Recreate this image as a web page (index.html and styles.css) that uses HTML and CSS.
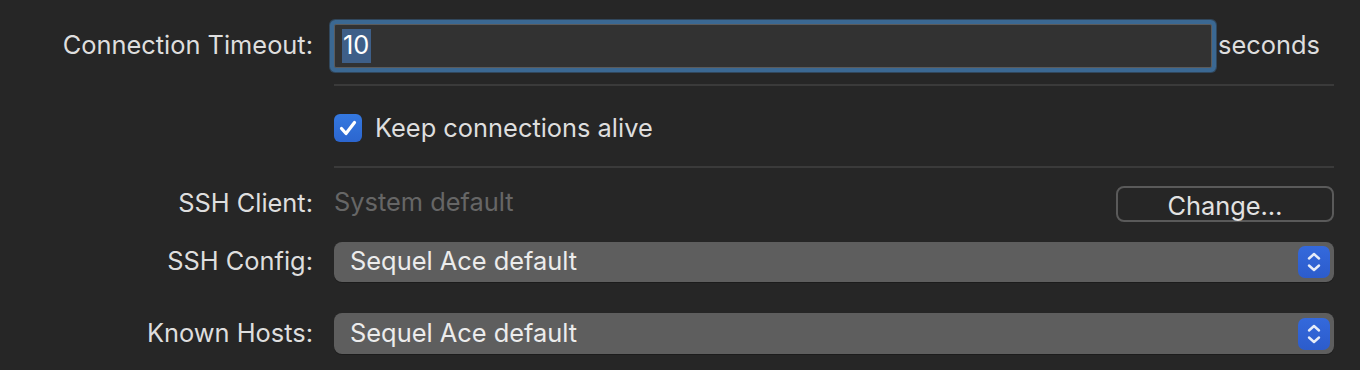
FILE: index.html
```html
<!DOCTYPE html>
<html>
<head>
<meta charset="utf-8">
<link rel="stylesheet" href="styles.css">
</head>
<body>
<div class="form">
  <div class="row row-timeout">
    <div class="label">Connection Timeout:</div>
    <div class="control">
      <div class="field"><span class="sel">10</span></div>
      <span class="unit">seconds</span>
    </div>
  </div>
  <div class="sep-row"><div></div><div class="sep"></div></div>
  <div class="row row-check">
    <div class="label"></div>
    <div class="control">
      <span class="checkbox">
        <svg width="28" height="28" viewBox="0 0 28 28"><path d="M7.5 14.5 L12 19.5 L20.5 8.5" fill="none" stroke="#fff" stroke-width="3.2" stroke-linecap="round" stroke-linejoin="round"/></svg>
      </span>
      <span class="check-label">Keep connections alive</span>
    </div>
  </div>
  <div class="sep-row sep-row2"><div></div><div class="sep"></div></div>
  <div class="row row-client">
    <div class="label">SSH Client:</div>
    <div class="control">
      <span class="muted">System default</span>
      <button class="btn">Change…</button>
    </div>
  </div>
  <div class="row row-config">
    <div class="label">SSH Config:</div>
    <div class="control">
      <div class="popup"><span>Sequel Ace default</span>
        <span class="stepper"><svg width="32" height="32" viewBox="0 0 32 32"><path d="M11 12.5 L16 8 L21 12.5 M11 19.5 L16 24 L21 19.5" fill="none" stroke="#e6ecf8" stroke-width="2.4" stroke-linecap="round" stroke-linejoin="round"/></svg></span>
      </div>
    </div>
  </div>
  <div class="row row-hosts">
    <div class="label">Known Hosts:</div>
    <div class="control">
      <div class="popup"><span>Sequel Ace default</span>
        <span class="stepper"><svg width="32" height="32" viewBox="0 0 32 32"><path d="M11 12.5 L16 8 L21 12.5 M11 19.5 L16 24 L21 19.5" fill="none" stroke="#e6ecf8" stroke-width="2.4" stroke-linecap="round" stroke-linejoin="round"/></svg></span>
      </div>
    </div>
  </div>
</div>
</body>
</html>
```
FILE: styles.css
```css
html, body {
  margin: 0;
  padding: 0;
  background: #262626;
  width: 1360px;
  height: 370px;
  overflow: hidden;
  font-family: Inter, "Noto Sans", sans-serif;
  font-size: 25.4px;
  color: #dedede;
}
.form {
  padding-top: 24px;
  padding-right: 26px;
  display: flex;
  flex-direction: column;
}
.row, .sep-row {
  display: grid;
  grid-template-columns: 313px 1fr;
  column-gap: 21px;
  align-items: center;
}
.label {
  text-align: right;
  white-space: nowrap;
  padding-bottom: 3px;
}
.control {
  display: flex;
  align-items: center;
  min-width: 0;
}
.row-timeout { height: 44px; }
.field {
  flex: 0 0 878px;
  height: 44px;
  box-sizing: border-box;
  background: #323232;
  border: 1px solid #5b5b5b;
  border-radius: 2px;
  box-shadow: 0 0 0 4px #3b6892, 0 0 0 5px rgba(59,104,146,0.5);
  display: flex;
  align-items: center;
  padding-left: 7px;
}
.sel {
  background: #3e5f88;
  color: #ffffff;
  height: 34px;
  line-height: 32px;
  padding: 0 2px 0 1px;
}
.unit {
  margin-left: 6px;
  padding-bottom: 3px;
}
.sep-row { margin-top: 16px; }
.sep-row2 { margin-top: 0; }
.sep {
  height: 2px;
  background: #3a3a3a;
}
.row-check { height: 80px; }
.checkbox {
  width: 28px;
  height: 28px;
  border-radius: 6px;
  background: linear-gradient(#3478e0, #2c66cf);
  display: inline-block;
  margin-top: 4px;
}
.checkbox svg { display: block; }
.check-label { margin-left: 13px; margin-top: 2px; }
.row-client { margin-top: 18px; height: 36px; }
.muted {
  color: #666666;
  flex: 1;
  margin-top: -5px;
}
.btn {
  width: 218px;
  height: 36px;
  box-sizing: border-box;
  background: transparent;
  border: 2px solid #5a5a5a;
  border-radius: 8px;
  color: #e2e2e2;
  font-family: inherit;
  font-size: 25.4px;
  padding: 2px 0 0 0;
}
.row-config { margin-top: 20px; }
.row-config .popup { height: 40px; }
.row-hosts { margin-top: 31px; }
.row-hosts .popup { height: 41px; }
.popup {
  flex: 1;
  box-sizing: border-box;
  background: #5e5e5e;
  border-radius: 8px;
  display: flex;
  align-items: center;
  justify-content: space-between;
  padding-left: 16px;
  padding-right: 4px;
  color: #ececec;
  box-shadow: 0 1px 0 rgba(0,0,0,0.25);
}
.popup > span:first-child { padding-bottom: 3px; }
.stepper {
  width: 32px;
  height: 32px;
  border-radius: 7px;
  background: linear-gradient(#3469dc, #2c5ccc);
  display: block;
}
.stepper svg { display: block; }
```
